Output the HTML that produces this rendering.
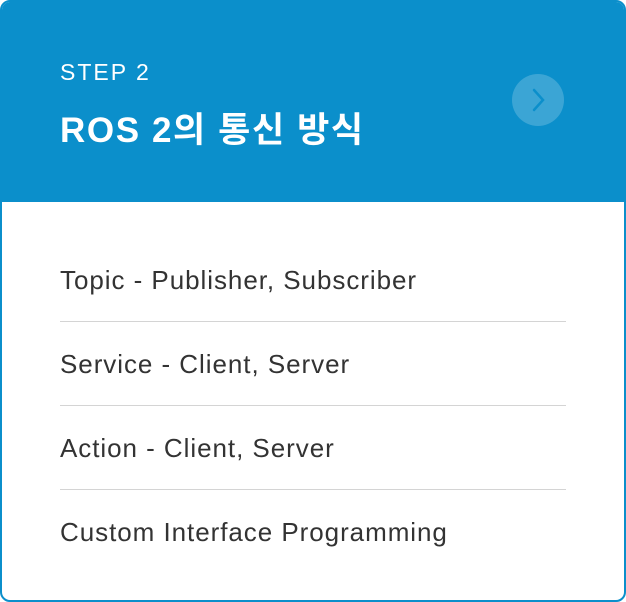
<!DOCTYPE html>
<html><head><style>
html,body{margin:0;padding:0;background:#fff;}
.card{position:absolute;left:0;top:0;width:622px;height:598px;border:2px solid #0b8fcb;border-radius:10px;overflow:hidden;background:#fff;font-family:"Liberation Sans","Noto Sans CJK KR",sans-serif;}
.head{position:absolute;left:0;top:0;width:622px;height:200px;background:#0b8fcb;}
.step{position:absolute;left:58px;top:57px;font-size:23px;color:#fff;letter-spacing:2px;}
.title{position:absolute;left:58px;top:100px;font-size:35px;font-weight:bold;color:#fff;letter-spacing:1.6px;}
.circ{position:absolute;left:510px;top:72px;width:52px;height:52px;border-radius:50%;background:rgba(255,255,255,0.2);}
.item{position:absolute;left:58px;width:520px;font-size:26px;color:#333;line-height:30px;letter-spacing:0.95px;white-space:nowrap;}
.line{position:absolute;left:58px;width:506px;height:1px;background:#d4d4d4;}
</style></head><body>
<div class="card">
<div class="head">
<div class="step">STEP 2</div>
<div class="title">ROS 2의 통신 방식</div>
<div class="circ"><svg width="52" height="52" viewBox="0 0 52 52"><path d="M22 16 L31 26 L22 36" fill="none" stroke="#0b8fcb" stroke-width="2.5" stroke-linecap="round"/></svg></div>
</div>
<div class="item" style="top:263px">Topic - Publisher, Subscriber</div>
<div class="line" style="top:319px"></div>
<div class="item" style="top:347px">Service - Client, Server</div>
<div class="line" style="top:403px"></div>
<div class="item" style="top:431px">Action - Client, Server</div>
<div class="line" style="top:487px"></div>
<div class="item" style="top:515px">Custom Interface Programming</div>
</div>
</body></html>
